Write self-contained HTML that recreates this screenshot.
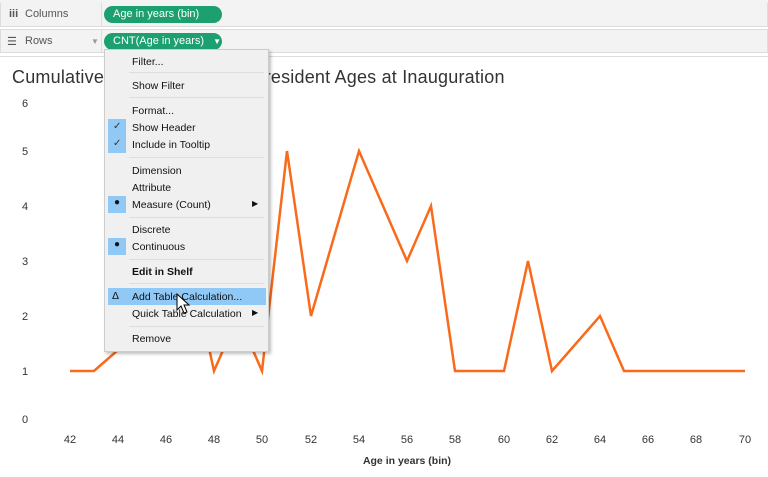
<!DOCTYPE html>
<html><head><style>
body{margin:0;width:768px;height:477px;overflow:hidden;background:#fff;font-family:"Liberation Sans",sans-serif;position:relative}
.shelf{position:absolute;left:0;width:768px;height:24px;background:#f3f3f3;border:1px solid #dcdcdc;box-sizing:border-box}
.lab{position:absolute;left:24px;top:5px;font-size:11px;color:#555}
.pill{position:absolute;left:104px;height:17px;border-radius:9px;background:#1da070;color:#fff;font-size:11px;line-height:17px;padding-left:9px;box-sizing:border-box}
.menu{position:absolute;left:104px;top:49px;width:163px;height:301px;background:#f0f0f0;border:1px solid #ccc;box-shadow:2px 2px 3px rgba(0,0,0,.25);font-size:10.5px;color:#111}
.it{position:absolute;left:27px}
.sep{position:absolute;left:24px;width:135px;height:1px;background:#ddd}
.ck{position:absolute;left:3px;width:18px;background:#90c8f6}
</style></head><body>
<div style="position:absolute;left:0;top:0;width:768px;height:5px;background:#f3f3f3;border-bottom:1px solid #ddd"></div>
<div class="shelf" style="top:3px;border-top:none"><span class="lab" style="left:8px;font-weight:bold">iii</span><span class="lab">Columns</span></div>
<div style="position:absolute;left:101px;top:3px;width:1px;height:24px;background:#ddd"></div>
<div class="pill" style="top:6px;width:118px">Age in years (bin)</div>
<div class="shelf" style="top:29px"><span class="lab" style="left:6px">☰</span><span class="lab">Rows</span><span class="lab" style="left:90px;font-size:8px;top:7px;color:#999">▼</span></div>
<div style="position:absolute;left:101px;top:29px;width:1px;height:24px;background:#ddd"></div>
<div class="pill" style="top:33px;width:118px">CNT(Age in years) <span style="font-size:8px;margin-left:6px">▼</span></div>
<div style="position:absolute;left:0;top:56px;width:768px;height:1px;background:#ddd"></div>
<div style="position:absolute;left:12px;top:67px;font-size:18px;letter-spacing:0.2px;color:#333">Cumulative Frequency of US President Ages at Inauguration</div>
<svg style="position:absolute;left:0;top:0" width="768" height="477">
<g font-size="11" fill="#333" font-family="Liberation Sans">
<text x="22" y="107">6</text><text x="22" y="155">5</text><text x="22" y="210">4</text><text x="22" y="265">3</text><text x="22" y="320">2</text><text x="22" y="375">1</text><text x="22" y="423">0</text>
<g text-anchor="middle"><text x="70" y="443">42</text><text x="118" y="443">44</text><text x="166" y="443">46</text><text x="214" y="443">48</text><text x="262" y="443">50</text><text x="311" y="443">52</text><text x="359" y="443">54</text><text x="407" y="443">56</text><text x="455" y="443">58</text><text x="504" y="443">60</text><text x="552" y="443">62</text><text x="600" y="443">64</text><text x="648" y="443">66</text><text x="696" y="443">68</text><text x="745" y="443">70</text>
<text x="407" y="464" font-weight="bold" font-size="10.5">Age in years (bin)</text></g></g>
<polyline fill="none" stroke="#f96a1b" stroke-width="2.5" stroke-linejoin="miter" points="70,371 94,371 118,350 142,316 166,290 190,261 214,371 238,316 262,371 287,151 311,316 359,151 407,261 431,206 455,371 504,371 528,261 552,371 600,316 624,371 745,371"/>
</svg>
<div class="menu">
<div class="it" style="top:6px">Filter...</div><div class="sep" style="top:22px"></div>
<div class="it" style="top:30px">Show Filter</div><div class="sep" style="top:47px"></div>
<div class="it" style="top:55px">Format...</div>
<div class="ck" style="top:69px;height:34px"></div>
<div style="position:absolute;left:8px;top:71px;font-size:10px;color:#333">✓</div>
<div style="position:absolute;left:8px;top:88px;font-size:10px;color:#333">✓</div>
<div class="it" style="top:72px">Show Header</div><div class="it" style="top:89px">Include in Tooltip</div>
<div class="sep" style="top:107px"></div>
<div class="it" style="top:115px">Dimension</div><div class="it" style="top:132px">Attribute</div>
<div class="ck" style="top:146px;height:17px"></div><div style="position:absolute;left:9px;top:147px;font-size:10px">●</div>
<div class="it" style="top:149px">Measure (Count)</div><div style="position:absolute;left:147px;top:149px;font-size:8px">▶</div>
<div class="sep" style="top:167px"></div>
<div class="it" style="top:174px">Discrete</div>
<div class="ck" style="top:188px;height:17px"></div><div style="position:absolute;left:9px;top:189px;font-size:10px">●</div>
<div class="it" style="top:191px">Continuous</div>
<div class="sep" style="top:209px"></div>
<div class="it" style="top:216px;font-weight:bold">Edit in Shelf</div>
<div class="sep" style="top:233px"></div>
<div style="position:absolute;left:3px;top:238px;width:158px;height:17px;background:#90c8f6"></div>
<div style="position:absolute;left:7px;top:240px">Δ</div>
<div class="it" style="top:241px">Add Table Calculation...</div>
<div class="it" style="top:258px">Quick Table Calculation</div><div style="position:absolute;left:147px;top:258px;font-size:8px">▶</div>
<div class="sep" style="top:276px"></div>
<div class="it" style="top:283px">Remove</div>
</div>
<svg style="position:absolute;left:176px;top:293px" width="16" height="22"><path d="M1,1 L1,17 L5,13 L8,20 L11,19 L8,12 L13,12 Z" fill="#fff" stroke="#000" stroke-width="1"/></svg>
</body></html>
